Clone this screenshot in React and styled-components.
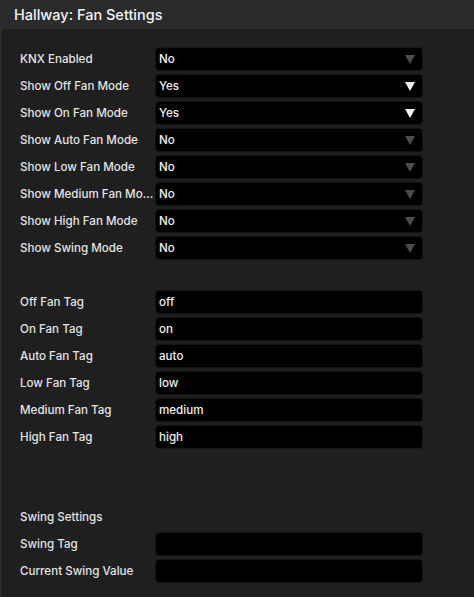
import React from 'react';
import styled, { createGlobalStyle } from 'styled-components';

const GlobalStyle = createGlobalStyle`
  html, body {
    margin: 0;
    padding: 0;
    background: #1f1f1f;
  }
  body {
    font-family: Inter, "Noto Sans", sans-serif;
    -webkit-font-smoothing: antialiased;
  }
`;

const Panel = styled.div`
  width: 474px;
  height: 597px;
  display: flex;
  flex-direction: column;
  background: #1f1f1f;
  border-left: 2px solid #2a2a2a;
  box-sizing: border-box;
  overflow: hidden;
`;

const TitleBar = styled.div`
  height: 29px;
  display: flex;
  align-items: center;
  padding-left: 12px;
  background: #2b2b2b;
  color: #f2f2f2;
  font-size: 14.5px;
  font-weight: 500;
  flex-shrink: 0;
`;

const Body = styled.div`
  display: flex;
  flex-direction: column;
  gap: 3px;
  padding: 18px 0 0 18px;
`;

const Row = styled.div`
  display: grid;
  grid-template-columns: 135px 268px;
  align-items: center;
  height: 24px;
`;

const Spacer = styled.div`
  height: ${(p) => p.size}px;
`;

const Label = styled.div`
  color: #e4e4e4;
  font-size: 11.6px;
  font-weight: 500;
  white-space: nowrap;
  overflow: hidden;
  text-overflow: ellipsis;
`;

const Field = styled.div`
  height: 24px;
  box-sizing: border-box;
  display: flex;
  align-items: center;
  justify-content: space-between;
  padding: 0 6px 0 3px;
  background: #000;
  border: 1px solid #141414;
  border-radius: 4px;
  color: #f0f0f0;
  font-size: 11.6px;
  font-weight: 500;
`;

const Arrow = styled.span`
  width: 0;
  height: 0;
  border-left: 5px solid transparent;
  border-right: 5px solid transparent;
  border-top: 9px solid ${(p) => (p.active ? '#f2f2f2' : '#4a4a4a')};
  margin-right: 1px;
`;

const selects = [
  ['KNX Enabled', 'No'],
  ['Show Off Fan Mode', 'Yes', true],
  ['Show On Fan Mode', 'Yes', true],
  ['Show Auto Fan Mode', 'No'],
  ['Show Low Fan Mode', 'No'],
  ['Show Medium Fan Mode', 'No'],
  ['Show High Fan Mode', 'No'],
  ['Show Swing Mode', 'No'],
];

const tags = [
  ['Off Fan Tag', 'off'],
  ['On Fan Tag', 'on'],
  ['Auto Fan Tag', 'auto'],
  ['Low Fan Tag', 'low'],
  ['Medium Fan Tag', 'medium'],
  ['High Fan Tag', 'high'],
];

export default function App() {
  return (
    <>
      <GlobalStyle />
      <Panel>
        <TitleBar>Hallway: Fan Settings</TitleBar>
        <Body>
          {selects.map(([label, value, active]) => (
            <Row key={label}>
              <Label>{label}</Label>
              <Field>
                {value}
                <Arrow active={active} />
              </Field>
            </Row>
          ))}
          <Spacer size={24} />
          {tags.map(([label, value]) => (
            <Row key={label}>
              <Label>{label}</Label>
              <Field>{value}</Field>
            </Row>
          ))}
          <Spacer size={50} />
          <Row>
            <Label>Swing Settings</Label>
          </Row>
          <Row>
            <Label>Swing Tag</Label>
            <Field />
          </Row>
          <Row>
            <Label>Current Swing Value</Label>
            <Field />
          </Row>
        </Body>
      </Panel>
    </>
  );
}
